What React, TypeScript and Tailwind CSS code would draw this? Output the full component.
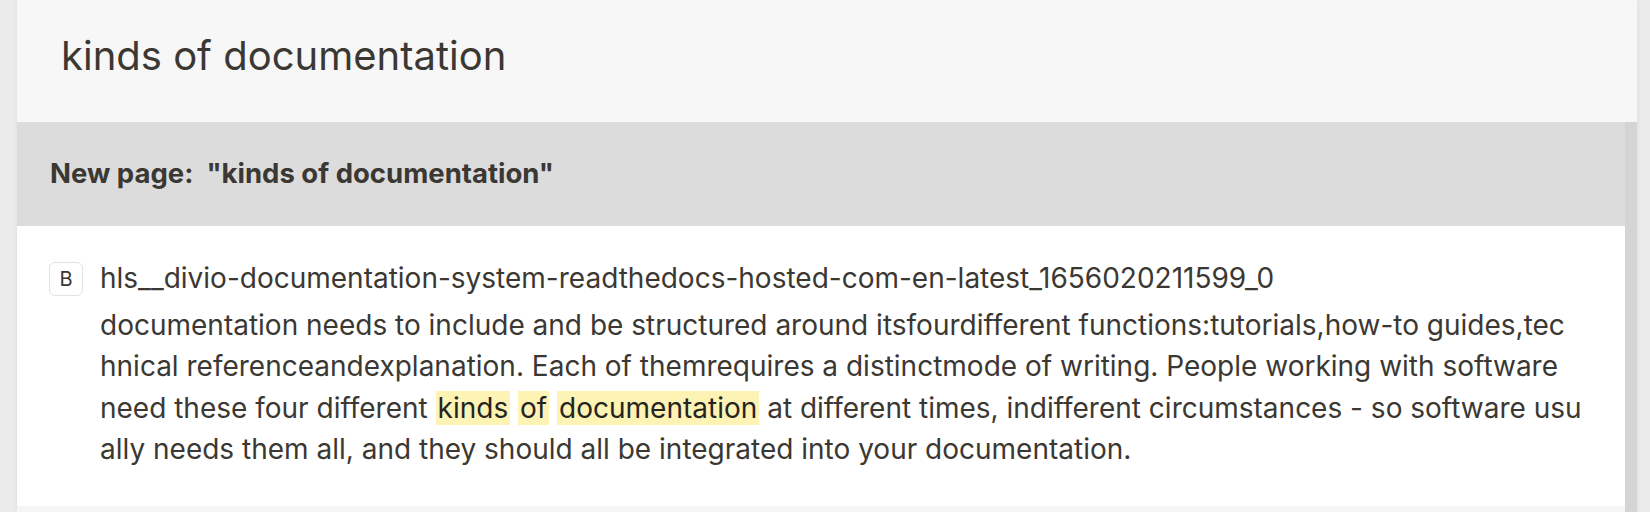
import React from "react";

const FONT = { fontFamily: "Inter, 'Noto Sans', sans-serif" };

function Hl({ children }: { children: React.ReactNode }) {
  return <span className="bg-[#fcf3b5] text-[#26241f] px-[2px]">{children}</span>;
}

export default function App() {
  return (
    <div className="h-[512px] w-[1650px] overflow-hidden bg-[#ebebeb] pl-[17px] pr-[13px]" style={FONT}>
      <div className="flex h-full flex-col bg-[#f7f7f7] shadow-[0_0_6px_rgba(0,0,0,0.06)]">
        <div className="flex h-[122px] shrink-0 items-center pl-[44px] pb-[10px]">
          <h1 className="text-[40px] font-normal leading-none text-[#3b3833]">kinds of documentation</h1>
        </div>

        <div className="flex min-h-0 flex-1">
          <div className="flex min-w-0 flex-1 flex-col">
            <div className="flex h-[104px] shrink-0 items-center bg-[#dcdcdc] pl-[33px]">
              <p className="whitespace-pre text-[27.5px] font-bold text-[#3b3833]">New page:  "kinds of documentation"</p>
            </div>

            <div className="flex h-[280px] shrink-0 items-start gap-[17px] bg-white pl-[32px] pr-[25px] pt-[32px]">
              <span className="mt-[4px] flex size-[34px] shrink-0 items-center justify-center rounded-[6px] border border-[#e2e2e2] text-[20px] text-[#3b3833]">
                B
              </span>
              <div className="min-w-0 flex-1 text-[28px] leading-[41.5px] text-[#3b3833]">
                <p>hls__divio-documentation-system-readthedocs-hosted-com-en-latest_1656020211599_0</p>
                {/* the source breaks words mid-way (tec|hnical, usu|ally), so lines are kept as shown */}
                <p className="mt-[5px] whitespace-nowrap">
                  documentation needs to include and be structured around itsfourdifferent functions:tutorials,how-to guides,tec
                  <br />
                  hnical referenceandexplanation. Each of themrequires a distinctmode of writing. People working with software
                  <br />
                  need these four different <Hl>kinds</Hl> <Hl>of</Hl> <Hl>documentation</Hl> at different times, indifferent circumstances - so software usu
                  <br />
                  ally needs them all, and they should all be integrated into your documentation.
                </p>
              </div>
            </div>

            <div className="flex-1 bg-[#f5f5f5]" />
          </div>
          <div className="w-[12px] shrink-0 bg-[#d4d4d4]" />
        </div>
      </div>
    </div>
  );
}
